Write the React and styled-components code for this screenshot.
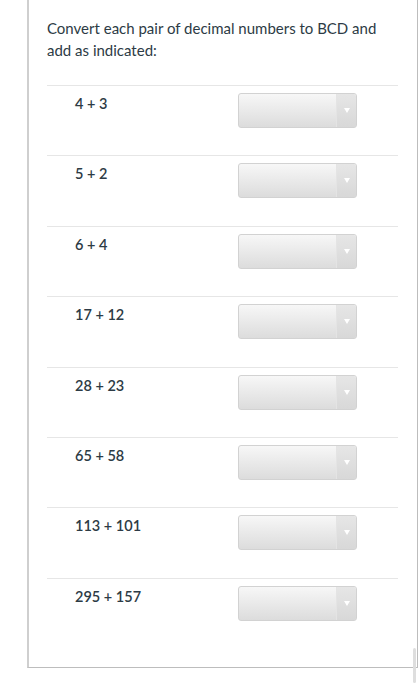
import React from "react";
import styled, { createGlobalStyle } from "styled-components";

const GlobalStyle = createGlobalStyle`
  body {
    margin: 0;
    background: #ffffff;
    font-family: Lato, "Noto Sans", sans-serif;
  }
`;

const problems = ["4 + 3", "5 + 2", "6 + 4", "17 + 12", "28 + 23", "65 + 58", "113 + 101", "295 + 157"];

export default function App() {
  return (
    <Page>
      <GlobalStyle />
      <Card>
        <Prompt>Convert each pair of decimal numbers to BCD and add as indicated:</Prompt>
        {problems.map((p) => (
          <Row key={p}>
            <Label>{p}</Label>
            <Select>
              <SelectBody />
              <SelectArrow>
                <Caret />
              </SelectArrow>
            </Select>
          </Row>
        ))}
      </Card>
      <Scroll />
    </Page>
  );
}

const Page = styled.div`
  position: relative;
  width: 420px;
  height: 700px;
`;

const Card = styled.div`
  margin-left: 27px;
  width: 391px;
  box-sizing: border-box;
  border: 1px solid #bdbdbd;
  border-left: 2px solid #cfcfcf;
  border-top: none;
  padding: 17px 19px 19px 18px;
`;

const Prompt = styled.p`
  margin: 0 0 24px;
  font-size: 15px;
  line-height: 22px;
  color: #2d3b45;
`;

const Row = styled.div`
  display: flex;
  align-items: flex-start;
  height: 70.4px;
  box-sizing: border-box;
  border-top: 1px solid #e6e6e6;
  padding: 7px 0 0 28px;
`;

const Label = styled.div`
  width: 163px;
  margin-top: 1px;
  font-size: 14.5px;
  font-weight: 600;
  line-height: 20px;
  color: #2d3b45;
`;

const Select = styled.div`
  display: flex;
  width: 119px;
  height: 35px;
  box-sizing: border-box;
  border: 1px solid #d2d2d2;
  border-radius: 3px;
  background: linear-gradient(#f7f7f7, #dcdcdc);
  overflow: hidden;
`;

const SelectBody = styled.div`
  flex: 1;
`;

const SelectArrow = styled.div`
  width: 19px;
  display: flex;
  align-items: center;
  justify-content: center;
  border-left: 1px solid #e4e4e4;
  background: linear-gradient(#e6e6e6, #d8d8d8);
`;

const Caret = styled.div`
  width: 0;
  height: 0;
  border-left: 3.5px solid transparent;
  border-right: 3.5px solid transparent;
  border-top: 5px solid #ffffff;
`;

const Scroll = styled.div`
  position: absolute;
  left: 413px;
  top: 648px;
  width: 3px;
  height: 35px;
  background: #dedede;
  border-radius: 2px;
`;
